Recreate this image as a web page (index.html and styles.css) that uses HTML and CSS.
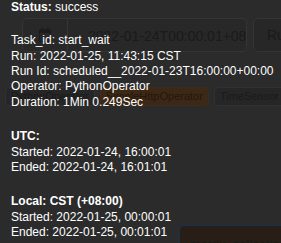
FILE: index.html
```html
<!doctype html>
<html lang="en">
<head>
    <meta charset="utf-8">
    <title>Task instance</title>
    <link rel="stylesheet" href="styles.css">
</head>
<body>
    <div class="page">
        <div class="toolbar">
            <div class="input-group">
                <span class="addon">
                    <svg class="cal" viewBox="0 0 12 14" width="12" height="14">
                        <rect x="0.5" y="2" width="11" height="11.5" rx="1.5" fill="none" stroke="currentColor" stroke-width="1.4"/>
                        <rect x="0.5" y="2" width="11" height="3" fill="currentColor"/>
                        <rect x="2.5" y="0" width="1.4" height="3" fill="currentColor"/>
                        <rect x="8.1" y="0" width="1.4" height="3" fill="currentColor"/>
                    </svg>
                </span>
                <span class="date-input">2022-01-24T00:00:01+08:00</span>
            </div>
            <button class="run-btn">Run</button>
        </div>

        <div class="tags">
            <span class="tag">PythonOperator</span>
            <span class="tag tag-orange">SimpleHttpOperator</span>
            <span class="tag">TimeSensor</span>
        </div>

        <div class="graph">
            <svg class="edge" viewBox="0 0 12 8" width="12" height="8">
                <path d="M0 6 L10 2" stroke="currentColor" stroke-width="1.2" fill="none"/>
                <path d="M6 1 L11 1.6 L8 5 Z" fill="currentColor"/>
            </svg>
            <div class="node">matrix_collection</div>
        </div>

        <!-- hover tooltip for the task instance -->
        <div class="tooltip">
            <div class="status"><b>Status:</b> success</div>
            <div class="sec">
                Task_id: start_wait<br>
                Run: 2022-01-25, 11:43:15 CST<br>
                Run Id: scheduled__2022-01-23T16:00:00+00:00<br>
                Operator: PythonOperator<br>
                Duration: 1Min 0.249Sec
            </div>
            <div class="sec">
                <b>UTC:</b><br>
                Started: 2022-01-24, 16:00:01<br>
                Ended: 2022-01-24, 16:01:01
            </div>
            <div class="sec">
                <b>Local: CST (+08:00)</b><br>
                Started: 2022-01-25, 00:00:01<br>
                Ended: 2022-01-25, 00:01:01
            </div>
        </div>
    </div>
</body>
</html>
```

FILE: styles.css
```css
body {
    margin: 0;
    font-family: 'Liberation Sans', Arial, sans-serif;
    background-color: #333333;
}

.page {
    position: relative;
    width: 281px;
    height: 243px;
    overflow: hidden;
    background-color: #333333;
}

.toolbar {
    display: flex;
    align-items: center;
    gap: 6px;
    padding: 18px 0 0 22px;
}

.input-group {
    display: flex;
    height: 34px;
    flex-shrink: 0;
}

.addon {
    display: flex;
    align-items: center;
    justify-content: center;
    width: 44px;
    border: 1px solid #3f3f3f;
    border-radius: 5px 0 0 5px;
    background-color: #303030;
    color: #212121;
}

.date-input {
    width: 158px;
    padding-left: 20px;
    border: 1px solid #3f3f3f;
    border-left: none;
    border-radius: 0 5px 5px 0;
    background-color: #2f2f2f;
    color: #202020;
    font-size: 14px;
    line-height: 34px;
    white-space: nowrap;
    overflow: hidden;
}

.run-btn {
    flex-shrink: 0;
    height: 34px;
    padding: 0 13px;
    border: 1px solid #3f3f3f;
    border-radius: 5px;
    background-color: #2e2e2e;
    color: #1f1f1f;
    font-family: inherit;
    font-size: 14px;
}

.tags {
    display: flex;
    gap: 5px;
    margin-top: 35px;
    padding-left: 5px;
}

.tag {
    flex-shrink: 0;
    padding: 0 5px;
    height: 17px;
    line-height: 17px;
    font-size: 11px;
    border: 1px solid #3a3a3a;
    border-radius: 4px;
    background-color: #2d2d2d;
    color: #202020;
}

.tag-orange {
    border-color: #4a3320;
    background-color: #46301c;
    color: #2c1b0c;
}

.graph {
    display: flex;
    align-items: flex-start;
    margin-top: 118px;
    padding-left: 178px;
}

.edge {
    margin-top: 12px;
    color: #23405e;
}

.node {
    flex-shrink: 0;
    width: 140px;
    height: 40px;
    padding: 11px 0 0 10px;
    border: 2px solid #24384c;
    border-radius: 6px;
    background-color: #31241a;
    color: #1e1e1e;
    font-size: 13px;
}

.tooltip {
    position: absolute;
    top: 0;
    left: 0;
    right: 0;
    bottom: 0;
    padding: 0 0 0 11px;
    background-color: rgba(0, 0, 0, 0.15);
    color: #ffffff;
    font-size: 12px;
    line-height: 15.36px;
    white-space: nowrap;
}

.status {
    margin-bottom: 18px;
}

.sec + .sec {
    margin-top: 19px;
}
```
